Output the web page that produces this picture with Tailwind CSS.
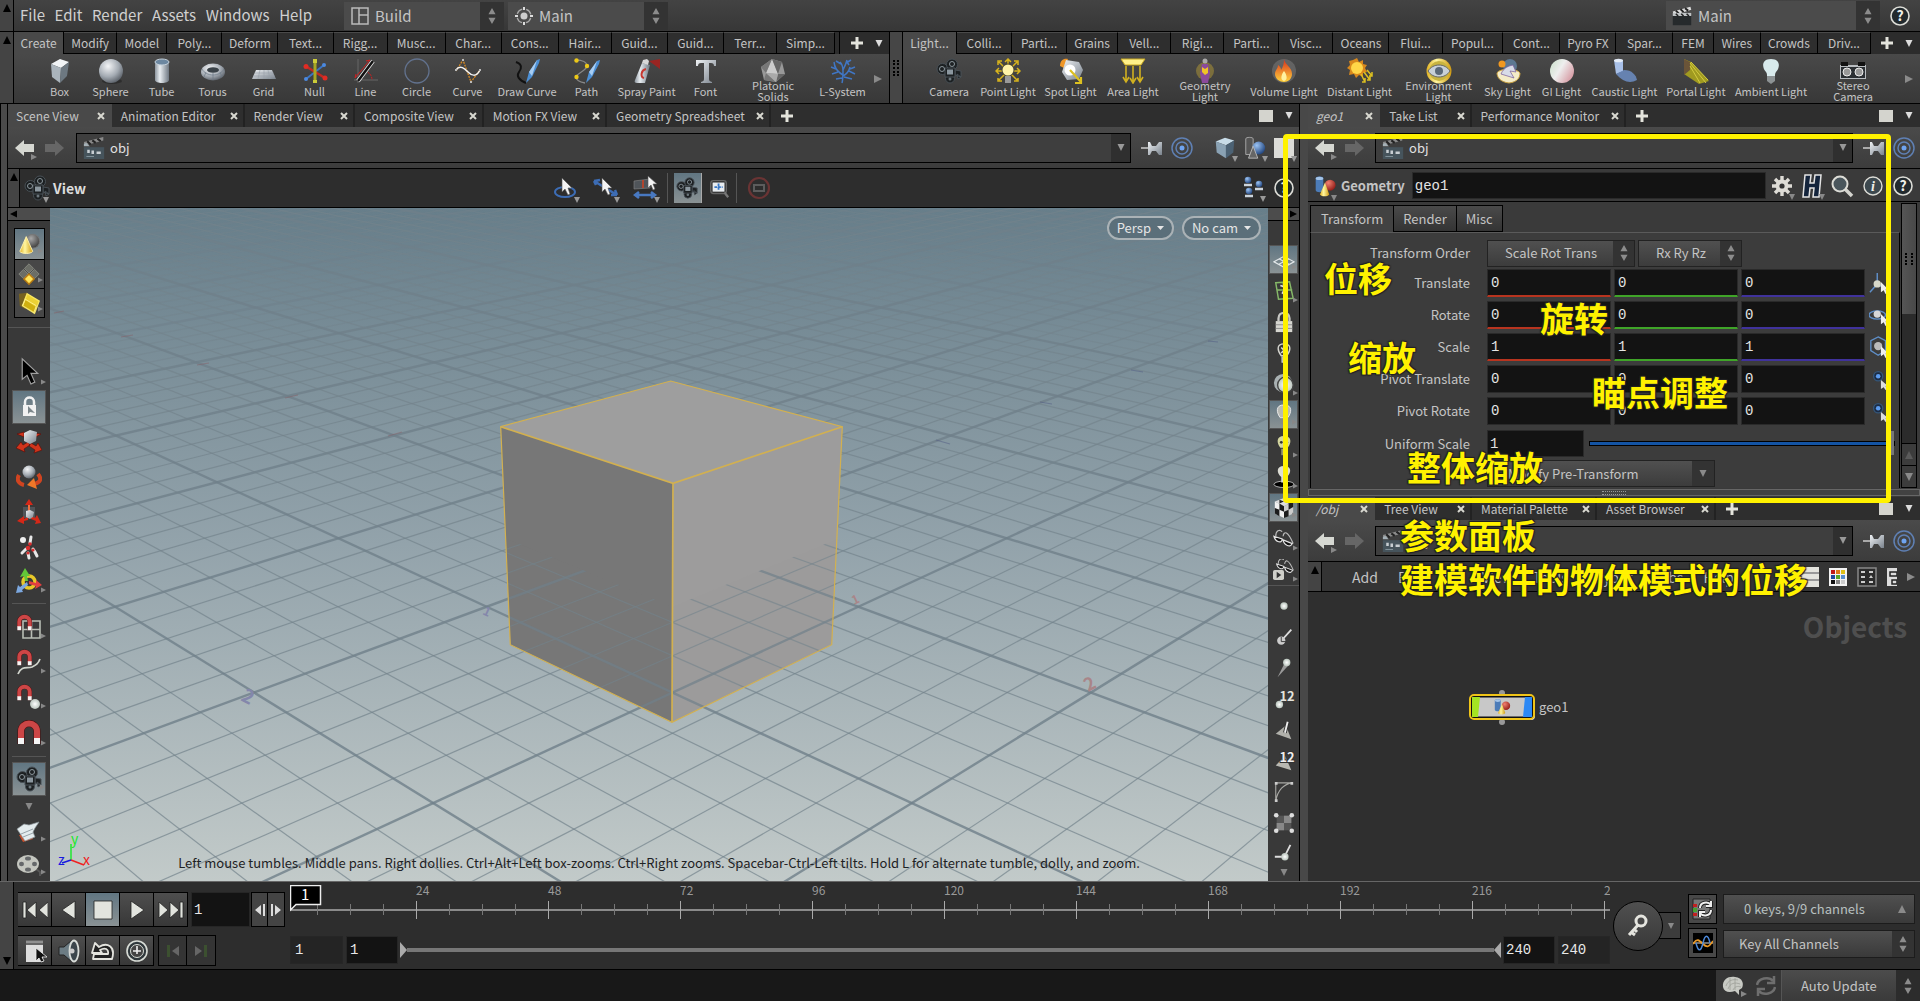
<!DOCTYPE html>
<html lang="zh-CN">
<head>
    <meta charset="UTF-8">
    <meta name="viewport" content="width=device-width, initial-scale=1.0">
    <title>Houdini - geo1</title>
    <script src="https://cdn.jsdelivr.net/npm/@tailwindcss/browser@4"></script>
</head>

<body class="h-screen flex flex-col overflow-hidden bg-[#3a3a3a] text-[#c4c4c4] text-[12px] leading-4 font-['Noto_Sans_CJK_SC','Noto_Sans',sans-serif]">

    <!-- Icon sheet -->
    <svg width="0" height="0" class="absolute" aria-hidden="true">
        <defs>
            <linearGradient id="gm" x1="0" y1="0" x2="1" y2="1"><stop offset="0" stop-color="#eef1f4"/><stop offset="1" stop-color="#79828c"/></linearGradient>
            <linearGradient id="gh" x1="0" x2="1"><stop offset="0" stop-color="#8d969f"/><stop offset=".35" stop-color="#e8edf1"/><stop offset="1" stop-color="#6f7882"/></linearGradient>
            <radialGradient id="gs" cx=".38" cy=".3" r=".8"><stop offset="0" stop-color="#f4f5f7"/><stop offset=".55" stop-color="#a4abb3"/><stop offset="1" stop-color="#4a5058"/></radialGradient>
            <radialGradient id="gd" cx=".38" cy=".3" r=".8"><stop offset="0" stop-color="#a8a8a8"/><stop offset="1" stop-color="#333"/></radialGradient>
            <radialGradient id="gb" cx=".35" cy=".3" r=".8"><stop offset="0" stop-color="#9cc4f4"/><stop offset="1" stop-color="#173a74"/></radialGradient>
            <radialGradient id="gr" cx=".35" cy=".3" r=".8"><stop offset="0" stop-color="#f08070"/><stop offset="1" stop-color="#8c1410"/></radialGradient>
            <linearGradient id="gy" x1="0" x2="1"><stop offset="0" stop-color="#e0b020"/><stop offset=".4" stop-color="#fff6a0"/><stop offset="1" stop-color="#d09a10"/></linearGradient>
            <linearGradient id="gf" x1="0" x2="0" y1="0" y2="1"><stop offset="0" stop-color="#d8301c"/><stop offset="1" stop-color="#ffd23c"/></linearGradient>
            <radialGradient id="gi"><stop offset="0" stop-color="#fff"/><stop offset="1" stop-color="#b9c4bc"/></radialGradient>
            <linearGradient id="gp" x1="0" x2="1" y2=".6"><stop offset="0" stop-color="#c8e0c8"/><stop offset=".5" stop-color="#eee"/><stop offset="1" stop-color="#d8a0a8"/></linearGradient>
        </defs>
        <symbol id="up" viewBox="0 0 10 10"><path d="M5 0 10 10H0z" fill="currentColor"/></symbol>
        <symbol id="dn" viewBox="0 0 10 10"><path d="M0 0H10L5 10z" fill="currentColor"/></symbol>
        <symbol id="rt" viewBox="0 0 10 10"><path d="M0 0 10 5 0 10z" fill="currentColor"/></symbol>
        <symbol id="lt" viewBox="0 0 10 10"><path d="M10 0V10L0 5z" fill="currentColor"/></symbol>
        <symbol id="spin" viewBox="0 0 8 18"><path d="M4 0 8 7H0zM0 11H8L4 18z" fill="#8c8c8c"/></symbol>
        <symbol id="plus" viewBox="0 0 12 12"><path d="M4.500 0h3v4.500H12v3H7.500V12h-3V7.500H0v-3h4.500z" fill="#e4e4dc"/></symbol>
        <symbol id="x" viewBox="0 0 8 8"><path d="M1 1 7 7M7 1 1 7" stroke="#d8d8d0" stroke-width="2"/></symbol>
        <symbol id="box" viewBox="0 0 26 26"><path d="M4 6 13 1l9 3-8 6z" fill="#f1f4f6"/><path d="M4 6l10 4-1 15-8-6z" fill="#aab4bc"/><path d="M14 10l8-6-2 14-7 7z" fill="#6d7881"/></symbol>
        <symbol id="sphere" viewBox="0 0 26 26"><ellipse cx="14" cy="23" rx="10" ry="3" fill="#222" opacity=".6"/><circle cx="13" cy="13" r="12" fill="url(#gs)"/></symbol>
        <symbol id="tube" viewBox="0 0 26 26"><path d="M6 4v18c0 4 14 4 14 0V4z" fill="url(#gh)"/><ellipse cx="13" cy="4" rx="7" ry="3" fill="#6c87a0" stroke="#c4d0da"/></symbol>
        <symbol id="torus" viewBox="0 0 26 26"><ellipse cx="13" cy="14" rx="12" ry="8.500" fill="url(#gs)"/><ellipse cx="13" cy="12" rx="6" ry="2.800" fill="#3a4248"/><path d="M2 11c4 8 18 8 22 0M13 15v7M6 14l-2 5M20 14l2 5" fill="none" stroke="#6d7a86" stroke-width=".7"/></symbol>
        <symbol id="grid" viewBox="0 0 26 26"><path d="M5 12h16l4 9H1z" fill="url(#gm)"/><path d="M3.500 15h19M2.500 18h21M9 12l-2 9M13 12v9M17 12l2 9" stroke="#97a0a8" stroke-width=".6"/></symbol>
        <symbol id="null" viewBox="0 0 26 26"><path d="M4 21 22 7" stroke="#3b74c2" stroke-width="2"/><circle cx="22" cy="7" r="2" fill="#4c8ae0"/><circle cx="4" cy="21" r="2" fill="#4c8ae0"/><path d="M5 9 23 20" stroke="#c22a22" stroke-width="2.500"/><circle cx="4" cy="8.500" r="2.500" fill="#e02c24"/><circle cx="23" cy="20" r="2.500" fill="#e02c24"/><path d="M13 2v23" stroke="#a8a822" stroke-width="3"/><path d="M11 1h4v4h-4zM11 22h4v3h-4z" fill="#cccc38"/></symbol>
        <symbol id="line" viewBox="0 0 26 26"><path d="M5 1v24M1 22h24" stroke="#666"/><path d="M12 13c6 2 7 6 7 9" stroke="#d02020" fill="none" stroke-dasharray="2 1"/><path d="M5 23 20 3" stroke="#e8e8e8" stroke-width="4"/><path d="M5 23 20 3" stroke="#111" stroke-width="2.500"/><path d="M2 20 17 2M2 20l1-4M17 2l-4 1" stroke="#d02020" fill="none"/></symbol>
        <symbol id="circle" viewBox="0 0 26 26"><circle cx="13" cy="13" r="12" fill="none" stroke="#62728e" stroke-width="1.300"/></symbol>
        <symbol id="curve" viewBox="0 0 26 26"><path d="M1 13 8 2l8 22 9-12" fill="none" stroke="#d88a20" stroke-width="1.300" stroke-dasharray="2 1"/><path d="M1 12c4-6 9-1 12 2s8 6 12-2" fill="none" stroke="#f4f4f4" stroke-width="1.500"/><path d="M0 11h2v2H0zM7 1h2v2H7zM15 23h2v2h-2zM24 11h2v2h-2z" fill="#bbb"/></symbol>
        <symbol id="draw" viewBox="0 0 26 26"><path d="M2 4c6 2 6 6 3 10s0 8 7 11" fill="none" stroke="#111" stroke-width="2"/><path d="M12 25 15 14 23 2l3-1-1 4-7 14z" fill="#4c8fd4"/><path d="M15 14l8-12-5 16z" fill="#a8cdf2"/></symbol>
        <symbol id="path" viewBox="0 0 26 26"><path d="M2 2c6 0 11 2 11 6S2 16 2 19s4 5 9 6" fill="none" stroke="#888" stroke-width="1.300"/><path d="M12 25 15 14 23 3l3-1-1 4-7 13z" fill="#4c8fd4"/><path d="M15 14l8-11-5 15z" fill="#a8cdf2"/><circle cx="2.500" cy="2.500" r="2.200" fill="#ecc818"/><circle cx="13" cy="8" r="2.200" fill="#ecc818"/><circle cx="2.500" cy="19" r="2.200" fill="#ecc818"/></symbol>
        <symbol id="spray" viewBox="0 0 26 26"><path d="M15 3 26 1v10z" fill="#a8201c" opacity=".85"/><path d="M8 5l8 2-5 18H3c-2 0-3-1-2-3z" fill="url(#gh)"/><path d="M9 2l4-1 2 2-1 4-6-2z" fill="#d8d8d8"/><path d="M12 11c-5 1-6 8-2 9" fill="none" stroke="#c83830" stroke-width="2"/></symbol>
        <symbol id="font" viewBox="0 0 26 26"><path d="M3 2h20v6h-2c0-2-1-3-3-3h-2v16c0 2 1 2 3 3v1H8v-1c2-1 3-1 3-3V5H8C6 5 5 6 5 8H3z" fill="url(#gm)"/></symbol>
        <symbol id="plato" viewBox="0 0 26 26"><path d="M12 1 22 4l3 12-9 8-12-2L1 9z" fill="#999"/><path d="M12 1 6 15l12 1z" fill="#ccc"/><path d="M12 1 6 15 1 9zM6 15l10 9-12-2z" fill="#777"/><path d="M12 1l10 3-4 12zM18 16l7 0-9 8z" fill="#666"/><path d="M6 15l12 1-2 8z" fill="#aaa"/></symbol>
        <symbol id="lsys" viewBox="0 0 26 26"><path d="M12 25c1-4 1-8 1-12M13 18c4-2 6-5 7-9M13 17C8 14 6 12 5 8M13 13c0-4-1-7-3-9M13 12c2-4 3-6 4-10M20 11l5-2M19 13l6 3M6 11 1 9M8 14l-6 2M11 6 6 3M16 5l5-3M12 20l-6 1M14 19l8 2M19 7l-2-3M5 9l-1-5" fill="none" stroke="#4076c4" stroke-width="1.500"/></symbol>
        <symbol id="cam" viewBox="0 0 26 26"><g fill="#1c2022" stroke="#485056"><circle cx="6.500" cy="11" r="5.500"/><circle cx="16" cy="6.500" r="5.500"/><path d="M19 12l6 1v6l-6-2zM21 16l4 3-3 2z"/><circle cx="14" cy="20.500" r="4.500"/><path d="M9 10h10v9H9z"/></g><circle cx="6" cy="11" r="2.500" fill="none" stroke="#8b969c"/><circle cx="16" cy="6" r="2.500" fill="none" stroke="#8b969c"/><path d="M11 11.500h6v5h-6z" fill="#8b979f"/><circle cx="14" cy="21" r="1.500" fill="#6c777d"/></symbol>
        <symbol id="plight" viewBox="0 0 26 26"><path d="M13 1v24M1 13h24M4 4l18 18M22 4 4 22M10 4l3-3 3 3M4 10l-3 3 3 3M22 10l3 3-3 3M3 7V3h4M23 7V3h-4M3 20v3h4M23 20v3h-4" fill="none" stroke="#d8b41c" stroke-width="1.500"/><circle cx="13" cy="12" r="6.500" fill="#4a4630"/><circle cx="13" cy="12" r="5.500" fill="#fff3a8"/><path d="M10 18h6v7h-6z" fill="#999"/></symbol>
        <symbol id="slight" viewBox="0 0 26 26"><path d="M2 8C2 2 6 0 10 1L6 10z" fill="#ef9628"/><path d="M8 2l13 2 4 8-4 9-12 1-5-8z" fill="url(#gm)"/><circle cx="12" cy="12" r="5.500" fill="#fff"/><path d="M12 12 23 24M23 19v6h-6" stroke="#dcc020" stroke-width="2.200" fill="none"/></symbol>
        <symbol id="alight" viewBox="0 0 26 26"><path d="M1 1h24l-4 6H5z" fill="#fff08a" stroke="#c8a820"/><path d="M6 8v15M13 8v16M20 8v15M3 19l3 5 3-5M10 20l3 5 3-5M17 19l3 5 3-5" fill="none" stroke="#d0b020" stroke-width="1.600"/></symbol>
        <symbol id="glight" viewBox="0 0 26 26"><circle cx="13" cy="13" r="9" fill="#e4c030" opacity=".35"/><circle cx="13" cy="3" r="2.500" fill="#aaa"/><path d="M10 6h6l2 9-2 10h-6L8 15z" fill="#8b4a9c"/><path d="M10 9l3 2 3-2v6l-3 2-3-3z" fill="#f0c428"/></symbol>
        <symbol id="vlight" viewBox="0 0 26 26"><circle cx="13" cy="13" r="12" fill="#bbb" opacity=".25"/><path d="M13 1c1 6 8 8 8 15 0 5-4 8-8 8s-9-3-9-8c0-4 3-5 3-9 3 2 3 4 3 5 2-3 3-6 3-11z" fill="url(#gf)"/><path d="M13 13c3 4 4 9 0 10-4-1-3-6 0-10z" fill="#fff1a0"/></symbol>
        <symbol id="dlight" viewBox="0 0 26 26"><path d="m10 0 2 4 4-2v4l4 1-2 3 2 4-4 1v4l-4-2-3 3-2-4-5 1 1-5-3-2 3-3-1-4 4-1z" fill="#d8881c"/><circle cx="10" cy="10" r="6" fill="#ffd648"/><path d="M14 16l4 8M17 14l6 8M20 12l5 6M15 24h3v-4M20 22h3v-4M22 18h3v-4" stroke="#dcc020" stroke-width="1.500" fill="none"/></symbol>
        <symbol id="elight" viewBox="0 0 26 26"><circle cx="13" cy="13" r="12.500" fill="url(#gy)"/><circle cx="13" cy="13" r="10" fill="#c8b440"/><path d="M2 13c5-8 17-8 22 0-5 8-17 8-22 0z" fill="#c8d0d8" stroke="#666"/><circle cx="13" cy="13" r="4" fill="#5a6878"/></symbol>
        <symbol id="sky" viewBox="0 0 26 26"><circle cx="15" cy="8" r="7" fill="#5c7892"/><circle cx="7" cy="6" r="3.500" fill="#f09820"/><path d="M2 15c2-5 20-5 23 0 0 4-2 9-11 10C5 24 2 19 2 15z" fill="#f4ecc8" stroke="#c8a040"/><path d="M6 16c3-7 8-8 12-9l3 7-6-1 4 7z" fill="#d8dce8" stroke="#775a9a" stroke-width=".7"/></symbol>
        <symbol id="gil" viewBox="0 0 26 26"><circle cx="13" cy="13" r="12" fill="url(#gp)"/></symbol>
        <symbol id="caustic" viewBox="0 0 26 26"><path d="M2 2h9v11l-7 3z" fill="#a8c0e8"/><path d="M4 16l8-4c8 0 12 5 13 10-7 4-14 2-21-6z" fill="#6f92cc" opacity=".8"/><ellipse cx="6.500" cy="2.500" rx="4.500" ry="1.800" fill="#e4ecf8"/></symbol>
        <symbol id="portal" viewBox="0 0 26 26"><path d="M1 1l7 3 18 19-10 3L1 16z" fill="#a09a20"/><path d="M1 1l6 3v8l-6 5z" fill="#6a5438"/><path d="M7 5l16 20M7 8l10 17M8 4l17 18" stroke="#d4cc40" stroke-width="1"/></symbol>
        <symbol id="ambient" viewBox="0 0 26 26"><path d="M13 1c10 0 9 9 5 13-1 1-1 3-1 4H9c0-1 0-3-1-4C4 10 3 1 13 1z" fill="#d8eaec"/><path d="M9 18h8v5l-4 3-4-3z" fill="#8c9294"/></symbol>
        <symbol id="stereo" viewBox="0 0 26 26"><path d="M0 7h26v14H0z" fill="#b8bcc0"/><path d="M1 4h7v4H1zM18 4h7v4h-7z" fill="#111"/><path d="M1 9h24v11H1z" fill="#2c3034"/><circle cx="7" cy="14" r="4" fill="#999" stroke="#eee"/><circle cx="19" cy="14" r="4" fill="#999" stroke="#eee"/></symbol>
        <symbol id="clap" viewBox="0 0 26 26"><path d="M1 7 24 1l1 4L2 12z" fill="#ddd"/><path d="M5 6l4 4M11 4l4 4M17 3l4 3" stroke="#222" stroke-width="2.500"/><path d="M1 12h24v13H1z" fill="#262a2c"/><path d="M1 9h24v4H1z" fill="#bfc3c5"/><path d="M5 10l3 3M12 10l3 3M19 10l3 3" stroke="#222" stroke-width="2"/></symbol>
        <symbol id="clap2" viewBox="0 0 26 28"><path d="M1 7 24 1v4L2 11z" fill="#8a8a8a"/><path d="M5 6l4 4M11 5l4 3M17 3l4 3" stroke="#222" stroke-width="2.500"/><path d="M1 9l3-1 4 4H1z" fill="#a4b0b6"/><path d="M1 13h24v14H1z" fill="#46545c"/><path d="M5 16h3v4H5zM10 17h3v4h-3zM16 18h5v3h-5z" fill="#c8ced2"/><path d="M4 24h9" stroke="#8fa0a8"/></symbol>
        <symbol id="back" viewBox="0 0 20 18"><path d="M0 9 9 1v4h10v8H9v4z" fill="#d6d8d2"/></symbol>
        <symbol id="fwd" viewBox="0 0 20 18"><path d="M20 9 11 1v4H1v8h10v4z" fill="#666"/></symbol>
        <symbol id="pin" viewBox="0 0 22 20"><path d="M0 10h7" stroke="#ccc" stroke-width="1.500"/><path d="M7 4l2 0 2 4h4l3-4h3v13h-3l-3-4h-4l-2 4H7z" fill="url(#gm)"/></symbol>
        <symbol id="target" viewBox="0 0 22 22"><g fill="none" stroke="#5f80b4" stroke-width="1.500"><circle cx="11" cy="11" r="10"/><circle cx="11" cy="11" r="6"/></g><circle cx="11" cy="11" r="2.500" fill="#6fa4f0"/></symbol>
        <symbol id="shade" viewBox="0 0 26 26"><path d="M3 6 13 2l10 3-9 5z" fill="#c8dce8"/><path d="M3 6l11 4v14L4 18z" fill="#8aa2b4"/><path d="M14 10l9-5-1 13-8 6z" fill="#4c6274"/></symbol>
        <symbol id="shapes" viewBox="0 0 26 26"><path d="M3 3c0-2 8-2 8 0v17H3z" fill="#555" stroke="#aaa"/><circle cx="17" cy="13" r="7" fill="url(#gb)"/><path d="M11 11 16 24H6z" fill="#666" stroke="#bbb"/></symbol>
        <symbol id="geo" viewBox="0 0 26 26"><path d="M2 4c0-3 9-3 9 0v14c0 3-9 3-9 0z" fill="#4c7cb8"/><ellipse cx="6.500" cy="4" rx="4.500" ry="2" fill="#a4c4e8"/><circle cx="19" cy="12" r="6.500" fill="url(#gr)"/><path d="M13 9 18 23c-2 3-9 3-11 0z" fill="url(#gy)"/></symbol>
        <symbol id="help" viewBox="0 0 22 22"><circle cx="11" cy="11" r="9" fill="#222a2e" stroke="#dcdcd6" stroke-width="1.600"/><text x="11" y="16" text-anchor="middle" font-size="14" font-weight="700" fill="#f0f0ea">?</text></symbol>
        <symbol id="info" viewBox="0 0 22 22"><circle cx="11" cy="11" r="9" fill="#3c484e" stroke="#dcdcd6" stroke-width="1.400"/><text x="11" y="16" text-anchor="middle" font-size="14" font-style="italic" font-weight="700" fill="#f0f0ea" font-family="Liberation Serif">i</text></symbol>
        <symbol id="gear" viewBox="0 0 24 24"><g stroke="#dedcd6" stroke-width="3.400"><path d="M12 2v20M2 12h20M5 5l14 14M19 5 5 19"/></g><circle cx="12" cy="12" r="6.500" fill="#dedcd6"/><circle cx="12" cy="12" r="2.600" fill="#333"/></symbol>
        <symbol id="hh" viewBox="0 0 24 24"><path d="M5 1h6L10 9h4l1-8h6l-2 22h-6l1-9h-4l-1 9H3z" fill="#14243c" stroke="#e4e4e4" stroke-width="1.500"/></symbol>
        <symbol id="mag" viewBox="0 0 24 24"><path d="m15 15 7 7" stroke="#d4d4ce" stroke-width="3.500"/><circle cx="10" cy="10" r="7.500" fill="#4a565c" stroke="#dcdcd6" stroke-width="2"/></symbol>
        <symbol id="ptr1" viewBox="0 0 26 26"><ellipse cx="12" cy="17" rx="10" ry="5" fill="none" stroke="#3c6cb4" stroke-width="2"/><path d="M9 3v14l3-3 3 6 2-1-2-6h4z" fill="#f4f4f4" stroke="#555" stroke-width=".6"/></symbol>
        <symbol id="ptr2" viewBox="0 0 26 26"><path d="M1 6 24 20M1 6l6-1M1 6l2 4M24 20l-6 0M24 20l-2-5" fill="none" stroke="#3c6cb4" stroke-width="2.500"/><path d="M9 3v14l3-3 3 6 2-1-2-6h4z" fill="#f4f4f4" stroke="#555" stroke-width=".6"/></symbol>
        <symbol id="ptr3" viewBox="0 0 26 26"><path d="M1 6l16-2v9L1 14z" fill="#50555a" stroke="#888" stroke-width=".6"/><path d="M10 5v8" stroke="#d04020" stroke-width="1.500"/><path d="M3 20h17M6 17l-4 3 4 3M18 17l4 3-4 3" fill="none" stroke="#4878c0" stroke-width="2.500"/><path d="M15 1v12l3-3 2 5 2-1-2-5h4z" fill="#f4f4f4" stroke="#555" stroke-width=".6"/></symbol>
        <symbol id="zoomb" viewBox="0 0 24 24"><rect x="3" y="4" width="17" height="14" rx="3" fill="none" stroke="#666" stroke-width="1.500"/><rect x="5" y="6" width="13" height="10" fill="#e8ecf0"/><path d="M11.500 7v8M7 11h9" stroke="#3878c8" stroke-width="2" stroke-dasharray="3 1"/><path d="m18 17 4 5" stroke="#777" stroke-width="2.500"/></symbol>
        <symbol id="stop" viewBox="0 0 24 24"><circle cx="12" cy="12" r="10" fill="none" stroke="#6a3434" stroke-width="2.200"/><rect x="7" y="9" width="10" height="6" fill="none" stroke="#5c5c5c" stroke-width="2"/></symbol>
        <symbol id="people" viewBox="0 0 24 24"><g fill="url(#gb)"><circle cx="7" cy="4" r="3.300"/><circle cx="18" cy="8" r="3.300"/><circle cx="8" cy="15" r="3.300"/></g><path d="M3 9h8M14 13h8M4 20h8" stroke="#ccd4dc" stroke-width="2.500"/></symbol>
        <symbol id="cone" viewBox="0 0 26 26"><circle cx="17" cy="10" r="7.500" fill="url(#gd)" stroke="#777"/><path d="M10 5 17 21c-2 3-12 3-14 0z" fill="url(#gy)" stroke="#fff2b0"/></symbol>
        <symbol id="diam" viewBox="0 0 26 26"><path d="M13 2l5 5-5 5-5-5zM7 8l5 5-5 5-5-5zM19 8l5 5-5 5-5-5z" fill="#6b6d66" stroke="#86887f"/><path d="M13 13l5.500 5.500-5.500 5.500-5.500-5.500z" fill="#ffe45c" stroke="#b87a10" stroke-width="1.600"/></symbol>
        <symbol id="ycube" viewBox="0 0 26 26"><path d="M2 3l9-1-2 18-6-4z" fill="#8a6c10" opacity=".7"/><path d="M11 3l13 8-5 13-13-8z" fill="#d0b010" stroke="#f4e468" stroke-width="1.500"/><path d="M11 3 8 9l12 8 4-6z" fill="#ffe84c" opacity=".6"/><path d="M6 16l3-7 12 7-3 8" fill="none" stroke="#fff08a"/></symbol>
        <symbol id="arrow" viewBox="0 0 26 30"><path d="M6 2v21l5-4 4 9 4-2-4-9h7z" fill="#000" stroke="#a0a0a0" stroke-width="1.200"/></symbol>
        <symbol id="lock" viewBox="0 0 26 26"><path d="M9 13V8c0-6 9-6 9 0v5" fill="none" stroke="#f2f2f2" stroke-width="2.500"/><path d="M7 11h13v11H7z" fill="#f2f2f2"/><path d="M12 12v8l2-2 5 1z" fill="#7d878b"/></symbol>
        <symbol id="move" viewBox="0 0 26 26"><path d="M1 5l7-2v5zM25 5l-7-1v5zM0 19l5-6 2 3 5-3 2 3-6 4 1 3zM26 21l-4-7-2 3-5-3-2 3 6 4-1 3z" fill="#d0341c" stroke="#5a0c06" stroke-width=".6"/><path d="M8 4l6-3 7 2-1 9-6 3-6-3z" fill="url(#gm)"/></symbol>
        <symbol id="rot" viewBox="0 0 26 26"><path d="M3 11C0 16 3 20 8 21M22 10c5 6 1 10-7 10" fill="none" stroke="#d04420" stroke-width="4"/><path d="M18 14l-7 7 10 4z" fill="#f07828"/><circle cx="13" cy="8" r="6.500" fill="url(#gs)"/></symbol>
        <symbol id="scl" viewBox="0 0 26 26"><path d="M7 8h12v11H7z" fill="#53585c" opacity=".9"/><path d="M13 0l4 6h-8zM1 22l7-5v3l4-2v3l-4 1v3zM25 24l-4-8-2 3-4-2v3l5 2-1 3z" fill="#d42818"/><path d="M13 6v6" stroke="#f07040" stroke-width="2"/><path d="M10 12l4-1 4 2-1 5-3 2-4-2z" fill="url(#gm)"/></symbol>
        <symbol id="pose" viewBox="0 0 26 26"><g stroke="#e8e8e8" stroke-width="3" stroke-linecap="round" fill="none"><path d="M15 3l-1 6M10 15l-4 4M17 15l2 3 2 4M12 19l1 5"/></g><circle cx="7" cy="6" r="3" fill="#eee"/><g fill="#d82c2c"><circle cx="14" cy="10" r="1.800"/><circle cx="12" cy="14" r="2.200"/><circle cx="17" cy="16" r="1.600"/><circle cx="12" cy="19" r="1.600"/></g></symbol>
        <symbol id="handle" viewBox="0 0 26 26"><circle cx="13" cy="14" r="6" fill="none" stroke="#e8c828" stroke-width="3.500"/><path d="M9 0l5 8-3 0 1 5-3 0-1-5-4 1z" fill="#62c838"/><path d="M26 17l-6-5v3l-7-2v3l7 2-1 3z" fill="#e04040"/><path d="M0 25l2-8 2 2 7-5 1 3-6 5 1 2z" fill="#7ca8e0"/></symbol>
        <symbol id="mg" viewBox="0 0 26 26"><path d="M5 24V11a8 7.500 0 0 1 16 0V24" fill="none" stroke="#4a0c0c" stroke-width="7"/><path d="M5 19V11a8 7.500 0 0 1 16 0V19" fill="none" stroke="#cc4646" stroke-width="6"/><path d="M2 18h6v6H2zM18 18h6v6h-6z" fill="#f4f4f4"/></symbol>
        <symbol id="mg1" viewBox="0 0 26 26"><path d="M7 7h17v17H7zM15.500 7v17M7 15.500h17" fill="none" stroke="#b8bdb4" stroke-width="1.600"/><use href="#mg" width="17" height="18"/></symbol>
        <symbol id="mg2" viewBox="0 0 26 26"><path d="M2 25c4-9 9-5 14-7 4-2 6-3 8-8" fill="none" stroke="#d0d4cc" stroke-width="1.800"/><use href="#mg" width="17" height="18"/></symbol>
        <symbol id="mg3" viewBox="0 0 26 26"><use href="#mg" width="17" height="18"/><circle cx="19" cy="20" r="5" fill="url(#gi)"/></symbol>
        <symbol id="fan" viewBox="0 0 26 26"><path d="M3 16l4 7 10-3-2-5z" fill="#c8502c"/><path d="M1 10l7-5 5 1 10-3-4 6-2 4 2 5-10 4z" fill="#e4ecee" stroke="#8a9498" stroke-width=".7"/><path d="M5 15l12-5M7 18l10-4" stroke="#96a2a8"/></symbol>
        <symbol id="reel" viewBox="0 0 26 26"><path d="M20 18l4 3v4" stroke="#555" stroke-width="2" fill="none"/><ellipse cx="12" cy="13" rx="11" ry="9" fill="#c4c6bf"/><g fill="#65686a"><ellipse cx="12" cy="7.500" rx="3" ry="2"/><ellipse cx="12" cy="18.500" rx="3" ry="2"/><ellipse cx="5.500" cy="13" rx="2.500" ry="2.300"/><ellipse cx="18.500" cy="13" rx="2.500" ry="2.300"/></g></symbol>
        <symbol id="rgrid" viewBox="0 0 24 24"><path d="M1 14l11-6 11 6-11 6zM7 11l11 6M17 11 6 17" fill="none" stroke="#e4e8ea" stroke-width="1.300"/></symbol>
        <symbol id="rpic" viewBox="0 0 24 24"><path d="M3 3l15-1 4 18-16 1zM4 11h17M11 2l2 19" fill="none" stroke="#86b868" stroke-width="1.600"/><path d="M8 6l6 2-4 7" fill="none" stroke="#ddd" stroke-width="2"/></symbol>
        <symbol id="rlock" viewBox="0 0 24 24"><path d="M6 11V8c0-8 12-8 12 0v3" fill="none" stroke="#c8c8c4" stroke-width="2.500"/><path d="M3 11h18v12H3z" fill="#d6d6d0"/><path d="M3 15h18M3 19h18" stroke="#888"/></symbol>
        <symbol id="rbx" viewBox="0 0 24 24"><path d="M12 2c9 0 7 8 3 13H9C5 10 3 2 12 2zM10 16v6h4v-6" fill="none" stroke="#d4d4ce" stroke-width="1.500"/><path d="M9 6l6 6M15 6l-6 6" stroke="#ddd" stroke-width="1.800"/></symbol>
        <symbol id="rball" viewBox="0 0 24 24"><circle cx="11" cy="11" r="10" fill="#a9b1b2"/><circle cx="13.500" cy="13" r="8.500" fill="url(#gi)" stroke="#444" stroke-width="1.500"/></symbol>
        <symbol id="rbulb" viewBox="0 0 24 24"><path d="M12 1c10 0 8 9 4 14H8C4 10 2 1 12 1z" fill="#b9bab4" stroke="#eee"/><path d="M9 16h6v6H9z" fill="#888"/></symbol>
        <symbol id="rbulb2" viewBox="0 0 24 24"><path d="M12 1c9 0 8 8 4 13H8C4 9 3 1 12 1z" fill="#d4d6a0"/><path d="M9 15h6v7H9z" fill="#989870"/><circle cx="9" cy="8" r="1.500" fill="#333"/><circle cx="15" cy="8" r="1.500" fill="#333"/></symbol>
        <symbol id="rbulb3" viewBox="0 0 24 24"><ellipse cx="12" cy="20" rx="11" ry="3.500" fill="#000" stroke="#bbb"/><path d="M12 0c9 0 8 8 3 12v6H9v-6C4 8 3 0 12 0z" fill="#dcdcd4"/></symbol>
        <symbol id="rcube" viewBox="0 0 24 24"><path d="M2 5l10-4 10 4-10 5z" fill="#ddd"/><path d="M7 3l5 2 5-2 5 2-5 2-5-2-5 2z" fill="#222"/><path d="M2 5l10 5v13L2 18z" fill="#f0f0f0"/><path d="M12 10l10-5v13l-10 5z" fill="#ccc"/><path d="M7 7l5 3v6l-5-2zM2 12l5 2v7l-5-3zM17 7l5-2v6l-5 3zM12 16l5-2v7l-5 2z" fill="#1c1c1c"/></symbol>
        <symbol id="glass" viewBox="0 0 24 24"><path d="M3 9c0-6 4-8 7-5M11 9c1-6 5-6 11 8" fill="none" stroke="#bbb" stroke-width="1.300"/><path d="M1 9l9 3c0 5-7 4-9-3zM11 13l10 4c-2 5-9 2-10-4z" fill="#111" stroke="#e4e4e4" stroke-width="1.300"/></symbol>
        <symbol id="glass2" viewBox="0 0 24 24"><use href="#glass" x="3" y="-3" width="21" height="22"/><rect x="0" y="12" width="12" height="11" rx="2" fill="#d0d0ca"/><path d="M4 14l5 3.500L4 21z" fill="#333"/></symbol>
        <symbol id="dot" viewBox="0 0 24 24"><circle cx="12" cy="12" r="4" fill="url(#gi)"/></symbol>
        <symbol id="nrm" viewBox="0 0 24 24"><path d="M10 15 20 4" stroke="#ddd" stroke-width="2"/><circle cx="9" cy="16" r="4.500" fill="#ccc"/><path d="M9 12v5h5" stroke="#333" fill="none"/></symbol>
        <symbol id="nrm2" viewBox="0 0 24 24"><path d="M5 22 13 6l4 3z" fill="#999"/><circle cx="15" cy="6" r="4" fill="url(#gi)"/></symbol>
        <symbol id="pn" viewBox="0 0 24 24"><circle cx="7" cy="18" r="4" fill="url(#gi)"/><text x="7" y="14" font-size="14" font-weight="700" fill="#e4e4de">12</text></symbol>
        <symbol id="fn" viewBox="0 0 24 24"><path d="M3 16l11-9 6 15z" fill="#b0b0aa"/><path d="M13 15l3-12" stroke="#333" stroke-width="4"/><path d="M13 15l3-12" stroke="#eee" stroke-width="2"/></symbol>
        <symbol id="fn2" viewBox="0 0 24 24"><path d="M3 17l10-11 7 16z" fill="#b8b8b2"/><text x="7" y="13" font-size="14" font-weight="700" fill="#eee" stroke="#333" stroke-width="2" paint-order="stroke">12</text></symbol>
        <symbol id="hull" viewBox="0 0 24 24"><path d="M3 23V2h18M3 22C5 10 12 3 21 2" fill="none" stroke="#a8a8a4" stroke-width="1.200"/><path d="M2 1h3v3H2zM19 1h3v3h-3zM2 20h3v3H2z" fill="#ccc"/></symbol>
        <symbol id="prim" viewBox="0 0 24 24"><path d="M4 4h16v16H4z" fill="#555"/><path d="M4 12h8v8H4zM12 4h8v8h-8z" fill="#888"/><g fill="#ddd"><circle cx="3.500" cy="3.500" r="2.500"/><circle cx="20.500" cy="3.500" r="2.500"/><circle cx="3.500" cy="20.500" r="2.500"/><circle cx="20.500" cy="20.500" r="2.500"/></g></symbol>
        <symbol id="vtx" viewBox="0 0 24 24"><path d="M2 15h9M13 14l6-12" stroke="#ddd" stroke-width="2"/><circle cx="13" cy="15" r="4" fill="url(#gi)"/></symbol>
        <symbol id="axes" viewBox="0 0 24 24"><path d="M9 1v12L1 22M9 13l8 5" stroke="#5f8fc8" stroke-width="1.600" fill="none"/><circle cx="9" cy="13" r="4" fill="#d8d8c8"/><path d="M13 11v11l3-2 2 4 2-1-2-4h3z" fill="#eee"/></symbol>
        <symbol id="orb" viewBox="0 0 24 24"><ellipse cx="9" cy="12" rx="9" ry="4.500" fill="none" stroke="#5f8fc8" stroke-width="1.600"/><circle cx="9" cy="11" r="4" fill="#d8d8d8"/><path d="M13 11v11l3-2 2 4 2-1-2-4h3z" fill="#eee"/></symbol>
        <symbol id="hex" viewBox="0 0 24 24"><path d="M10 1l8 4v11l-8 5-8-5V5z" fill="none" stroke="#5f8fc8" stroke-width="1.500"/><circle cx="10" cy="11" r="4.500" fill="#bbb"/><path d="M13 11v11l3-2 2 4 2-1-2-4h3z" fill="#eee"/></symbol>
        <symbol id="piv" viewBox="0 0 24 24"><circle cx="10" cy="9" r="5" fill="#1c2c44" stroke="#345578" stroke-width="1.500"/><circle cx="10" cy="9" r="2.500" fill="#5c9cf0"/><path d="M13 13v10l3-2 2 3 2-1-2-3h3z" fill="#ddd"/></symbol>
    </svg>

    <!-- Main menu -->
    <header class="flex h-8 shrink-0 border-b border-black bg-gradient-to-b from-[#434343] to-[#373737]">
        <div class="w-[14px] shrink-0 border-r border-black bg-[#444] pt-1 text-black"><svg class="mx-auto h-2 w-2"><use href="#up"/></svg></div>
        <nav class="flex w-[298px] items-center justify-between pb-[2px] pl-[6px] text-[15px] text-[#d0d0d0]">
            <a href="#">File</a><a href="#">Edit</a><a href="#">Render</a><a href="#">Assets</a><a href="#">Windows</a><a href="#">Help</a>
        </nav>
        <div class="ml-8 mt-[2px] flex h-7 gap-1">
            <label class="flex w-40 items-center bg-[#4b4b4b] pl-[7px]">
                <svg class="h-[18px] w-[18px] shrink-0" viewBox="0 0 18 18"><path d="M1 1h16v16H1zM8 1v16M8 8h9" fill="none" stroke="#bbb" stroke-width="1.500"/></svg>
                <select aria-label="Desktop" class="ml-[6px] min-w-0 flex-1 appearance-none bg-transparent text-[15px] leading-6 outline-none"><option>Build</option></select>
                <span class="flex h-7 w-6 items-center justify-center bg-[#333]"><svg class="h-4 w-2"><use href="#spin"/></svg></span>
            </label>
            <label class="flex w-40 items-center bg-[#4b4b4b] pl-[6px]">
                <svg class="h-5 w-5 shrink-0" viewBox="0 0 20 20"><circle cx="10" cy="10" r="7" fill="none" stroke="#aaa" stroke-dasharray="7 4" stroke-dashoffset="-2" stroke-width="1.300"/><circle cx="10" cy="10" r="3.500" fill="#ccc"/><path d="M9 1h2v3H9zM9 16h2v3H9zM1 9h3v2H1zM16 9h3v2h-3z" fill="#ddd"/></svg>
                <select aria-label="Radial menu" class="ml-[5px] min-w-0 flex-1 appearance-none bg-transparent text-[15px] leading-6 outline-none"><option>Main</option></select>
                <span class="flex h-7 w-6 items-center justify-center bg-[#333]"><svg class="h-4 w-2"><use href="#spin"/></svg></span>
            </label>
        </div>
        <label class="ml-auto mt-px flex h-[29px] w-[214px] items-center bg-[#4b4b4b] pl-[5px]">
            <svg class="h-5 w-[22px] shrink-0"><use href="#clap"/></svg>
            <select aria-label="Take" class="ml-[5px] min-w-0 flex-1 appearance-none bg-transparent text-[15px] leading-6 outline-none"><option>Main</option></select>
            <span class="flex h-[29px] w-6 items-center justify-center bg-[#333]"><svg class="h-4 w-2"><use href="#spin"/></svg></span>
        </label>
        <button aria-label="Help" class="mx-[9px]"><svg class="h-[22px] w-[22px]"><use href="#help"/></svg></button>
    </header>

    <!-- Shelves -->
    <section class="flex h-[72px] shrink-0 border-b border-black bg-[#2c2c2c]">
        <div class="w-[14px] shrink-0 border-r border-black bg-[#444] pt-1 text-black"><svg class="mx-auto h-2 w-2"><use href="#up"/></svg></div>
        <div class="flex w-[875px] shrink-0 flex-col">
            <div class="flex h-[22px]">
                <div id="tabsL" class="flex w-[821px]"></div>
                <span class="ml-1 w-px bg-black"></span>
                <button aria-label="Add shelf" class="ml-[11px]"><svg class="h-3 w-3"><use href="#plus"/></svg></button>
                <button aria-label="Shelf menu" class="ml-3 text-[#ddd]"><svg class="h-[7px] w-2"><use href="#dn"/></svg></button>
            </div>
            <div id="toolsL" class="flex flex-1 items-center bg-gradient-to-b from-[#494949] to-[#383838] pl-5"></div>
        </div>
        <div class="flex w-[14px] shrink-0 items-center justify-center border-x border-black bg-[#464646]"><span class="h-4 w-[6px] border-x-2 border-dotted border-black"></span></div>
        <div class="flex min-w-0 flex-1 flex-col">
            <div class="flex h-[22px]">
                <div id="tabsR" class="flex flex-1"></div>
                <button aria-label="Add shelf" class="ml-[10px]"><svg class="h-3 w-3"><use href="#plus"/></svg></button>
                <button aria-label="Shelf menu" class="ml-3 mr-[7px] text-[#ddd]"><svg class="h-[7px] w-2"><use href="#dn"/></svg></button>
            </div>
            <div id="toolsR" class="flex flex-1 items-center bg-gradient-to-b from-[#494949] to-[#383838] pl-[18px]"></div>
        </div>
    </section>

    <main class="flex min-h-0 flex-1">
        <div class="w-2 shrink-0 border-x border-black bg-[#4a4a4a]"></div>

        <!-- Scene view pane -->
        <section class="flex min-w-0 flex-1 flex-col">
            <div class="flex h-[23px] shrink-0 items-stretch bg-[#2e2e2e]">
                <div data-tabs="Scene View|Animation Editor|Render View|Composite View|Motion FX View|Geometry Spreadsheet" class="flex"></div>
                <span class="ml-auto mr-3 h-3 w-[14px] self-center bg-[#d4d4ce]"></span>
                <svg class="mr-[6px] h-[7px] w-2 self-center text-[#ddd]"><use href="#dn"/></svg>
            </div>
            <div class="flex h-[42px] shrink-0 items-center border-b border-black bg-gradient-to-b from-[#4a4a4a] to-[#3c3c3c] pl-[7px]">
                <button aria-label="Back" class="relative"><svg class="h-[18px] w-5"><use href="#back"/></svg><svg class="absolute -right-[2px] -bottom-1 h-2 w-[6px] text-[#888]"><use href="#rt"/></svg></button>
                <button aria-label="Forward" class="ml-[9px]"><svg class="h-[18px] w-5"><use href="#fwd"/></svg></button>
                <label class="ml-3 flex h-[30px] flex-1 items-center border border-black bg-[#3e3e3e] pl-[6px]">
                    <svg class="h-6 w-[22px] shrink-0"><use href="#clap2"/></svg>
                    <input aria-label="Network path" value="obj" class="ml-[5px] min-w-0 flex-1 bg-transparent text-[13px] text-[#e0e0e0] outline-none">
                    <span class="flex h-full w-[19px] items-center justify-center bg-[#2f2f2f] text-[#999]"><svg class="h-[7px] w-2"><use href="#dn"/></svg></span>
                </label>
                <button aria-label="Pin" class="ml-[10px]"><svg class="h-5 w-[22px]"><use href="#pin"/></svg></button>
                <button aria-label="Link" class="ml-2"><svg class="h-[22px] w-[22px]"><use href="#target"/></svg></button>
                <button aria-label="Shading" class="relative ml-5"><svg class="h-6 w-6"><use href="#shade"/></svg><svg class="absolute -right-[2px] -bottom-[2px] h-[6px] w-2 text-[#999]"><use href="#dn"/></svg></button>
                <button aria-label="Display objects" class="relative ml-[6px]"><svg class="h-6 w-6"><use href="#shapes"/></svg><svg class="absolute -right-[2px] -bottom-[2px] h-[6px] w-2 text-[#999]"><use href="#dn"/></svg></button>
                <button aria-label="Layout" class="relative ml-[7px] mr-[5px] h-5 w-5 bg-[#dcdcd8]"><svg class="absolute -right-1 -bottom-1 h-[6px] w-2 text-[#999]"><use href="#dn"/></svg></button>
            </div>
            <div class="flex h-[39px] shrink-0 items-center border-b border-black bg-[#2d2d2d]">
                <div class="h-full w-3 border-r border-black bg-[#444] pt-1 text-black"><svg class="mx-auto h-2 w-2"><use href="#up"/></svg></div>
                <button class="flex items-center pl-1 text-[14px] font-bold text-[#dcdcdc]"><span class="relative mr-[3px]"><svg class="h-[26px] w-[26px]"><use href="#cam"/></svg><svg class="absolute right-0 -bottom-[2px] h-[6px] w-2 text-[#999]"><use href="#dn"/></svg></span>View</button>
                <div class="flex flex-1 items-center justify-center pr-1">
                    <button aria-label="Tumble" class="relative mr-[14px]"><svg class="h-[26px] w-[26px]"><use href="#ptr1"/></svg><svg class="absolute -right-[2px] -bottom-[2px] h-[6px] w-2 text-[#999]"><use href="#dn"/></svg></button>
                    <button aria-label="Pan" class="relative mr-[14px]"><svg class="h-[26px] w-[26px]"><use href="#ptr2"/></svg><svg class="absolute -right-[2px] -bottom-[2px] h-[6px] w-2 text-[#999]"><use href="#dn"/></svg></button>
                    <button aria-label="Dolly" class="relative mr-2"><svg class="h-[26px] w-[26px]"><use href="#ptr3"/></svg><svg class="absolute -right-[2px] -bottom-[2px] h-[6px] w-2 text-[#999]"><use href="#dn"/></svg></button>
                    <span class="h-[30px] w-px bg-[#555]"></span>
                    <button aria-label="View tool" class="ml-[6px] flex h-[30px] w-7 items-center justify-center border-r border-[#aaa] bg-gradient-to-b from-[#617682] to-[#8a9294]"><svg class="h-[22px] w-[22px]"><use href="#cam"/></svg></button>
                    <button aria-label="Box zoom" class="mx-[6px]"><svg class="h-[22px] w-[22px]"><use href="#zoomb"/></svg></button>
                    <span class="h-[30px] w-px bg-[#555]"></span>
                    <button aria-label="Stop" class="ml-[10px]"><svg class="h-6 w-6"><use href="#stop"/></svg></button>
                </div>
                <button aria-label="Views" class="relative"><svg class="h-6 w-6"><use href="#people"/></svg><svg class="absolute -right-[2px] -bottom-[2px] h-[6px] w-2 text-[#999]"><use href="#dn"/></svg></button>
                <button aria-label="Viewport help" class="ml-2 mr-1"><svg class="h-[22px] w-[22px]"><use href="#help"/></svg></button>
            </div>

            <div class="flex min-h-0 flex-1">
                <!-- Left tool column -->
                <div id="colL" class="flex w-[42px] shrink-0 flex-col items-center bg-[#393939]">
                    <div class="h-[13px] w-full border-b border-black bg-[#4c4c4c] pl-[2px] pt-[2px] text-black"><svg class="h-2 w-[7px]"><use href="#lt"/></svg></div>
                </div>
                <!-- Viewport -->
                <div class="relative min-w-0 flex-1">
                    <svg class="block h-full w-full" viewBox="50 208 1218 673" preserveAspectRatio="xMidYMid slice">
                        <defs>
                            <linearGradient id="sky0" x1="0" y1="0" x2="0" y2="1"><stop offset="0" stop-color="#677e8a"/><stop offset=".5" stop-color="#93a3ab"/><stop offset="1" stop-color="#c2cac9"/></linearGradient>
                            <clipPath id="front"><path d="M505 538 672.500 606.700 839.600 538 832 645 672 722 510 645z"/></clipPath>
                        </defs>
                        <rect x="50" y="208" width="1218" height="673" fill="url(#sky0)"/>
                        <g id="lines" fill="none"></g>
                        <g fill="none" stroke="#8a5a62" stroke-width="1.200" opacity=".45"><path d="M54 313l10-2M121 337l12-2M197 365l12-2M285 398l13-3M388 436l14-4"/></g>
                        <g fill="none" stroke="#4c5480" stroke-width="1.200" opacity=".45"><path d="M936 440l14 4M1040 402l12 2M1131 370l12 2M1208 341l10 1"/></g>
                        <g font-weight="700" fill="#8487ab"><text transform="translate(240 700) rotate(28)" font-size="19">2</text><text transform="translate(482 614) rotate(25)" font-size="12">1</text></g>
                        <g font-weight="700" fill="#a98588"><text transform="translate(1088 692) rotate(-28)" font-size="18">2</text><text transform="translate(854 605) rotate(-25)" font-size="12">1</text></g>
                        <path d="M670.700 381 842.300 426.700 673 483.300 500.700 426.700z" fill="#9e9e9e"/>
                        <path d="M500.700 426.700 673 483.300 672 722.300 510.300 644.700z" fill="#777"/>
                        <path d="M673 483.300 842.300 426.700 831.700 644.700 672 722.300z" fill="#9d9c9c"/>
                        <use href="#lines" clip-path="url(#front)" opacity=".85"/>
                        <g fill="none" stroke="#d2b050"><path d="M500.700 426.700 670.700 381 842.300 426.700 831.700 644.700 672 722.300 510.300 644.700z" stroke-width="1.200"/><path d="M500.700 426.700 673 483.300 842.300 426.700M673 483.300 672 722.300" stroke-width="1.700"/></g>
                        <g fill="none" stroke-width="1.500"><path d="M71 860V844" stroke="#20e830"/><path d="M71 860l13 5" stroke="#f02020"/><path d="M71 860l-9 3" stroke="#1818e0"/></g>
                        <g font-size="14"><text x="71" y="844" fill="#18e828">y</text><text x="83" y="865" fill="#f02020">x</text><text x="58" y="865" fill="#1818e0">z</text></g>
                    </svg>
                    <div class="absolute right-[7px] top-2 flex gap-2">
                        <button class="flex h-6 items-center gap-[6px] rounded-full border-2 border-[#aab2b6] bg-[#5b6f7a] px-2 text-[13px] text-[#e6e6e6]">Persp<svg class="h-1 w-[7px]" viewBox="0 0 7 4"><path d="M0 0h7L3.500 4z" fill="#e6e6e6"/></svg></button>
                        <button class="flex h-6 items-center gap-[6px] rounded-full border-2 border-[#aab2b6] bg-[#5b6f7a] px-2 text-[13px] text-[#e6e6e6]">No cam<svg class="h-1 w-[7px]" viewBox="0 0 7 4"><path d="M0 0h7L3.500 4z" fill="#e6e6e6"/></svg></button>
                    </div>
                    <p class="absolute inset-x-0 bottom-2 text-center text-[13px] leading-5 text-[#1e2224]">Left mouse tumbles. Middle pans. Right dollies. Ctrl+Alt+Left box-zooms. Ctrl+Right zooms. Spacebar-Ctrl-Left tilts. Hold L for alternate tumble, dolly, and zoom.</p>
                </div>
                <!-- Display options column -->
                <div id="colR" class="flex w-[31px] shrink-0 flex-col items-center bg-[#393939]">
                    <div class="mb-[23px] h-[13px] w-full shrink-0 border-b border-black bg-[#4c4c4c] pr-[2px] pt-[2px] text-black"><svg class="ml-auto h-2 w-[7px]"><use href="#rt"/></svg></div>
                </div>
            </div>
        </section>

        <div class="w-[9px] shrink-0 border-l border-black bg-[#484848]"></div>

        <!-- Right side -->
        <section class="relative flex w-[612px] shrink-0 flex-col">
            <div class="flex h-[23px] shrink-0 bg-[#2e2e2e]">
                <div data-tabs="*geo1|Take List|Performance Monitor" class="flex"></div>
                <span class="ml-auto mr-3 h-3 w-[14px] self-center bg-[#d4d4ce]"></span>
                <svg class="mr-[7px] h-[7px] w-2 self-center text-[#ddd]"><use href="#dn"/></svg>
            </div>
            <div class="flex h-[42px] shrink-0 items-center border-b border-black bg-gradient-to-b from-[#4a4a4a] to-[#3c3c3c] pl-[7px]">
                <button aria-label="Back" class="relative"><svg class="h-[18px] w-5"><use href="#back"/></svg><svg class="absolute -right-[2px] -bottom-1 h-2 w-[6px] text-[#888]"><use href="#rt"/></svg></button>
                <button aria-label="Forward" class="ml-[9px]"><svg class="h-[18px] w-5"><use href="#fwd"/></svg></button>
                <label class="ml-[11px] flex h-[30px] flex-1 items-center border border-black bg-[#3e3e3e] pl-[6px]">
                    <svg class="h-6 w-[22px] shrink-0"><use href="#clap2"/></svg>
                    <input aria-label="Parameter path" value="obj" class="ml-[5px] min-w-0 flex-1 bg-transparent text-[13px] text-[#e0e0e0] outline-none">
                    <span class="flex h-full w-[19px] items-center justify-center bg-[#2f2f2f] text-[#999]"><svg class="h-[7px] w-2"><use href="#dn"/></svg></span>
                </label>
                <button aria-label="Pin" class="ml-[10px]"><svg class="h-5 w-[22px]"><use href="#pin"/></svg></button>
                <button aria-label="Link" class="ml-2 mr-[5px]"><svg class="h-[22px] w-[22px]"><use href="#target"/></svg></button>
            </div>
            <div class="flex h-[33px] shrink-0 items-center border-b border-black pl-[6px] pt-px">
                <span class="relative"><svg class="h-[22px] w-[22px]"><use href="#geo"/></svg><svg class="absolute -right-[2px] -bottom-1 h-[6px] w-2 text-[#888]"><use href="#dn"/></svg></span>
                <label for="nodeName" class="ml-[5px] text-[13px] font-bold">Geometry</label>
                <input id="nodeName" value="geo1" class="ml-[7px] h-[27px] min-w-0 flex-1 border border-[#2a2a2a] bg-[#131313] px-[2px] font-['Liberation_Mono',monospace] text-[14px] text-[#e4e4e4] outline-none">
                <button aria-label="Gear menu" class="relative ml-1"><svg class="h-6 w-6"><use href="#gear"/></svg><svg class="absolute -right-[2px] -bottom-[2px] h-[6px] w-2 text-[#888]"><use href="#dn"/></svg></button>
                <button aria-label="Houdini" class="relative ml-[6px]"><svg class="h-6 w-6"><use href="#hh"/></svg><svg class="absolute -right-[2px] -bottom-[2px] h-[6px] w-2 text-[#888]"><use href="#dn"/></svg></button>
                <button aria-label="Search" class="ml-[6px]"><svg class="h-6 w-6"><use href="#mag"/></svg></button>
                <button aria-label="Info" class="ml-2"><svg class="h-[22px] w-[22px]"><use href="#info"/></svg></button>
                <button aria-label="Help" class="ml-2 mr-[6px]"><svg class="h-[22px] w-[22px]"><use href="#help"/></svg></button>
            </div>
            <div class="flex h-[286px] shrink-0 pl-[2px] pr-[3px]">
                <div class="flex min-w-0 flex-1 flex-col pt-[3px]">
                    <div class="flex h-[27px] text-[13px]">
                        <button class="border border-b-0 border-black bg-[#424242] px-[10px]">Transform</button>
                        <button class="border border-l-0 border-black bg-gradient-to-b from-[#4a4a4a] to-[#343434] px-[9px]">Render</button>
                        <button class="border border-l-0 border-black bg-gradient-to-b from-[#4a4a4a] to-[#343434] px-[9px]">Misc</button>
                    </div>
                    <form id="parms" class="flex min-h-0 flex-1 flex-col overflow-hidden border-x border-black border-t border-t-[#5a5a5a] bg-[#3c3c3c] pt-[6px] text-[13px]">
                        <div class="flex h-7 shrink-0 items-center">
                            <label for="order" class="w-[159px] text-right">Transform Order</label>
                            <span class="ml-[17px] flex h-[27px] w-[148px] border border-[#222] bg-gradient-to-b from-[#505050] to-[#3c3c3c]">
                                <select id="order" class="min-w-0 flex-1 appearance-none pl-[17px] leading-5 outline-none"><option>Scale Rot Trans</option></select>
                                <span class="flex w-[21px] items-center justify-center bg-[#333]"><svg class="h-4 w-2"><use href="#spin"/></svg></span>
                            </span>
                            <span class="ml-[3px] flex h-[27px] w-[104px] border border-[#222] bg-gradient-to-b from-[#505050] to-[#3c3c3c]">
                                <select aria-label="Rotate order" class="min-w-0 flex-1 appearance-none pl-[17px] leading-5 outline-none"><option>Rx Ry Rz</option></select>
                                <span class="flex w-[21px] items-center justify-center bg-[#333]"><svg class="h-4 w-2"><use href="#spin"/></svg></span>
                            </span>
                        </div>
                        <div id="vectors" class="shrink-0"></div>
                        <div class="mt-[2px] flex h-[29px] shrink-0 items-center">
                            <label for="uscale" class="w-[159px] text-right">Uniform Scale</label>
                            <input id="uscale" value="1" class="ml-[17px] h-[27px] w-[97px] border border-[#2a2a2a] bg-[#131313] px-[2px] font-['Liberation_Mono',monospace] text-[14px] text-[#e4e4e4] outline-none">
                            <input type="range" aria-label="Uniform Scale slider" value="100" class="ml-[5px] mr-1 h-6 min-w-0 flex-1 appearance-none bg-transparent [&::-webkit-slider-runnable-track]:h-[5px] [&::-webkit-slider-runnable-track]:border [&::-webkit-slider-runnable-track]:border-black [&::-webkit-slider-runnable-track]:bg-[#1454a4] [&::-webkit-slider-thumb]:-mt-[11px] [&::-webkit-slider-thumb]:h-6 [&::-webkit-slider-thumb]:w-1 [&::-webkit-slider-thumb]:appearance-none [&::-webkit-slider-thumb]:bg-[#777]">
                        </div>
                        <button type="button" class="ml-[176px] mt-[2px] flex h-[27px] w-[228px] shrink-0 items-center justify-between border border-[#222] bg-gradient-to-b from-[#505050] to-[#3c3c3c] pl-5">
                            Modify Pre-Transform
                            <span class="flex h-full w-[22px] items-center justify-center bg-[#333] text-[#8a8a8a]"><svg class="h-[7px] w-2"><use href="#dn"/></svg></span>
                        </button>
                    </form>
                </div>
                <!-- Scrollbar -->
                <div class="ml-px mt-px flex w-4 flex-col border border-black bg-[#2b2b2b]">
                    <div class="flex h-[110px] items-center justify-center bg-gradient-to-r from-[#555] to-[#484848]"><span class="h-3 w-2 border-x-2 border-dotted border-black"></span></div>
                    <div class="mt-auto flex h-[22px] items-center justify-center border-t border-black bg-[#3c3c3c] text-[#5a5a5a]"><svg class="h-2 w-2"><use href="#up"/></svg></div>
                    <div class="flex h-[22px] items-center justify-center border-t border-black bg-[#3c3c3c] text-[#8a8a8a]"><svg class="h-2 w-2"><use href="#dn"/></svg></div>
                </div>
            </div>
            <div class="my-px flex h-[7px] shrink-0 items-center justify-center border border-[#666] bg-[#424242]"><span class="h-1 w-6 border-y border-dotted border-[#999]"></span></div>

            <!-- Network pane -->
            <div class="flex h-[23px] shrink-0 bg-[#2e2e2e]">
                <div data-tabs="*/obj|Tree View|Material Palette|Asset Browser" class="flex"></div>
                <span class="ml-auto mr-3 h-3 w-[14px] self-center bg-[#d4d4ce]"></span>
                <svg class="mr-[7px] h-[7px] w-2 self-center text-[#ddd]"><use href="#dn"/></svg>
            </div>
            <div class="flex h-[42px] shrink-0 items-center border-b border-black bg-gradient-to-b from-[#4a4a4a] to-[#3c3c3c] pl-[7px]">
                <button aria-label="Back" class="relative"><svg class="h-[18px] w-5"><use href="#back"/></svg><svg class="absolute -right-[2px] -bottom-1 h-2 w-[6px] text-[#888]"><use href="#rt"/></svg></button>
                <button aria-label="Forward" class="ml-[9px]"><svg class="h-[18px] w-5"><use href="#fwd"/></svg></button>
                <label class="ml-[11px] flex h-[30px] flex-1 items-center border border-black bg-[#3e3e3e] pl-[6px]">
                    <svg class="h-6 w-[22px] shrink-0"><use href="#clap2"/></svg>
                    <input aria-label="Network path" value="obj" class="ml-[5px] min-w-0 flex-1 bg-transparent text-[13px] text-[#e0e0e0] outline-none">
                    <span class="flex h-full w-[19px] items-center justify-center bg-[#2f2f2f] text-[#999]"><svg class="h-[7px] w-2"><use href="#dn"/></svg></span>
                </label>
                <button aria-label="Pin" class="ml-[10px]"><svg class="h-5 w-[22px]"><use href="#pin"/></svg></button>
                <button aria-label="Link" class="ml-2 mr-[5px]"><svg class="h-[22px] w-[22px]"><use href="#target"/></svg></button>
            </div>
            <nav class="flex h-[30px] shrink-0 items-center gap-5 border-b border-black bg-[#343434] text-[14px]">
                <span class="-mr-1 h-full w-[14px] border-r border-black bg-[#444] pt-1 text-black"><svg class="mx-auto h-2 w-2"><use href="#up"/></svg></span>
                <a href="#" class="ml-[14px]">Add</a><a href="#">Edit</a><a href="#">Go</a><a href="#">View</a><a href="#">Tools</a><a href="#">Layout</a><a href="#">Labs</a><a href="#">Help</a>
                <span class="ml-auto flex items-center gap-[10px]">
                    <button aria-label="List"><svg class="h-[22px] w-5" viewBox="0 0 20 22"><path d="M0 1h20v20H0z" fill="#e4e4de"/><path d="M0 7h20M0 14h20" stroke="#999" stroke-width="2"/></svg></button>
                    <button aria-label="Palette"><svg class="h-[18px] w-[18px]" viewBox="0 0 18 18"><path d="M0 0h18v18H0z" fill="#f4f4f4"/><path d="M2 2h4v4H2z" fill="#c01818"/><path d="M7 2h4v4H7z" fill="#e07818"/><path d="M12 2h4v4h-4z" fill="#e0c018"/><path d="M2 7h4v4H2z" fill="#2048a0"/><path d="M7 7h4v4H7z" fill="#58a828"/><path d="M12 7h4v4h-4z" fill="#5890d0"/><path d="M2 12h4v4H2z" fill="#111"/><path d="M7 12h4v4H7z" fill="#888"/><path d="M12 12h4v4h-4z" fill="#ccc"/></svg></button>
                    <button aria-label="Shapes"><svg class="h-5 w-5" viewBox="0 0 20 20"><path d="M1 1h18v18H1z" fill="#2b2b2b" stroke="#888" stroke-width="1.500"/><path d="M4 4h4v2H4zM12 4h4v2h-4zM4 9h4v2H4zM12 11l2-3 2 3zM4 14h4v2H4zM12 14h4v2h-4z" fill="#ccc"/></svg></button>
                    <button aria-label="Notes"><svg class="h-[18px] w-[10px]" viewBox="0 0 10 18"><path d="M0 0h10v18H0z" fill="#ddd"/><path d="M3 4h7v4H3zM5 12h5v4H5z" fill="none" stroke="#222" stroke-width="1.500"/></svg></button>
                    <svg class="mr-[5px] h-2 w-2 text-[#8c8c8c]"><use href="#rt"/></svg>
                </span>
            </nav>
            <div class="relative flex-1 bg-[#2f2f2f]">
                <h2 class="absolute right-[13px] top-[14px] text-[28px] leading-10 font-bold text-[#4f4f4f]">Objects</h2>
                <div class="absolute left-[161px] top-[97px] flex items-center gap-[3px] text-[13px]">
                    <svg class="h-9 w-[67px]" viewBox="0 0 67 36"><circle cx="33" cy="4" r="3" fill="#999"/><circle cx="33" cy="33" r="3" fill="#999"/><rect x="4" y="9" width="62" height="22" rx="4" fill="#ddd"/><rect x="2" y="7" width="62" height="22" rx="4" fill="#c8c8c8" stroke="#111" stroke-width="3"/><path d="M3 8h8L9 28H3z" fill="#a4e422"/><path d="M56 8h7v20h-9z" fill="#2c88f4"/><rect x="1" y="6" width="64" height="24" rx="4" fill="none" stroke="#f0c418" stroke-width="2"/><svg x="24" y="9" width="18" height="17"><use href="#geo"/></svg></svg>
                    geo1
                </div>
            </div>

            <!-- Annotations over the panels -->
            <div class="pointer-events-none absolute inset-0 whitespace-nowrap text-[34px] leading-[34px] font-bold text-[#fff200] [text-shadow:1px_1px_1px_#222,-1px_-1px_1px_#222,1px_-1px_1px_#222,-1px_1px_1px_#222]">
                <div class="absolute -left-[25px] top-[30px] h-[369px] w-[608px] rounded-sm border-[5px] border-[#fff200]"></div>
                <p class="absolute left-4 top-[157px]">位移</p>
                <p class="absolute left-[232px] top-[197px]">旋转</p>
                <p class="absolute left-10 top-[236px]">缩放</p>
                <p class="absolute left-[284px] top-[271px]">瞄点调整</p>
                <p class="absolute left-[99px] top-[346px]">整体缩放</p>
                <p class="absolute left-[92px] top-[414px]">参数面板</p>
                <p class="absolute left-[92px] top-[458px]">建模软件的物体模式的位移</p>
            </div>
        </section>
    </main>

    <!-- Playbar -->
    <section class="flex h-[89px] shrink-0 border-y border-t-[#666] border-b-black bg-[#2d2d2d]">
        <div class="flex w-[14px] shrink-0 items-end border-r border-black bg-[#444] pb-1 text-black"><svg class="mx-auto h-2 w-2"><use href="#dn"/></svg></div>
        <div class="flex w-[276px] shrink-0 flex-col gap-2 pl-1 pt-[10px]">
            <div class="flex h-[35px]">
                <div id="play" class="flex"></div>
                <input aria-label="Current frame" value="1" class="ml-[3px] w-[59px] border border-[#262626] bg-[#131313] px-[2px] font-['Liberation_Mono',monospace] text-[14px] text-[#e8e8e8] outline-none">
                <button aria-label="Previous frame" class="ml-px flex w-[17px] items-center justify-center border border-black bg-[#444]"><svg class="h-3 w-[10px]" viewBox="0 0 10 12"><path d="M6 1v10L0 6zM8 0h2v12H8z" fill="#ddd"/></svg></button>
                <button aria-label="Next frame" class="flex w-[17px] items-center justify-center border border-l-0 border-black bg-[#444]"><svg class="h-3 w-[10px]" viewBox="0 0 10 12"><path d="M4 1v10l6-5zM0 0h2v12H0z" fill="#ddd"/></svg></button>
            </div>
            <div id="opts" class="flex h-[31px]"></div>
        </div>
        <div class="flex min-w-0 flex-1 flex-col pt-[3px]">
            <svg id="timeline" class="h-10 w-full overflow-hidden"></svg>
            <div class="mt-[11px] flex h-7 items-center font-['Liberation_Mono',monospace] text-[14px] text-[#e8e8e8]">
                <input aria-label="Start" value="1" class="h-7 w-[53px] border border-[#262626] bg-[#242424] px-1 outline-none">
                <input aria-label="Range start" value="1" class="ml-[3px] h-7 w-[52px] border border-[#262626] bg-[#131313] px-[3px] outline-none">
                <div class="mx-[2px] flex flex-1 items-center text-[#aaa]"><svg class="h-4 w-[7px]" viewBox="0 0 7 16"><path d="M0 0 7 8 0 16z" fill="#aaa"/></svg><span class="h-1 flex-1 bg-[#777]"></span><svg class="h-4 w-[7px]" viewBox="0 0 7 16"><path d="M7 0 0 8l7 8z" fill="#aaa"/></svg></div>
                <input aria-label="Range end" value="240" class="h-7 w-[52px] border border-[#262626] bg-[#131313] px-[2px] outline-none">
                <input aria-label="End" value="240" class="ml-[3px] h-7 w-[52px] border border-[#262626] bg-[#242424] px-[2px] outline-none">
            </div>
        </div>
        <div class="flex w-[310px] shrink-0 items-center pl-[3px]">
            <button aria-label="Set key" class="z-10 flex h-[50px] w-[50px] shrink-0 items-center justify-center rounded-full border border-black bg-gradient-to-b from-[#505050] to-[#383838]"><svg class="h-6 w-6" viewBox="0 0 24 24"><circle cx="15" cy="7" r="5" fill="none" stroke="#e4e4de" stroke-width="3"/><path d="M12 11 3 21M5 18l4 3M8 15l3 3" stroke="#e4e4de" stroke-width="3"/></svg></button>
            <button aria-label="Key menu" class="-ml-[6px] flex h-[27px] w-6 items-center justify-center border border-black bg-[#3c3c3c] pl-1 text-[#8a8a8a]"><svg class="h-[6px] w-2"><use href="#dn"/></svg></button>
            <div class="ml-[7px] flex flex-col gap-1">
                <button aria-label="Update keys" class="relative flex h-[30px] w-[29px] items-center justify-center border border-black bg-[#484848]"><svg class="h-[22px] w-[22px]" viewBox="0 0 22 22"><path d="M1 1h17v20H1z" fill="#777" stroke="#222"/><path d="M1 6h4v3H1zM1 15h4v3H1z" fill="#c02020"/><path d="M1 10h4v4H1z" fill="#48a030"/><path d="M8 10c0-6 8-7 11-3M19 12c0 6-8 7-11 3M19 3v5h-5M8 19v-5h5" fill="none" stroke="#222" stroke-width="4"/><path d="M8 10c0-6 8-7 11-3M19 12c0 6-8 7-11 3M19 3v5h-5M8 19v-5h5" fill="none" stroke="#eee" stroke-width="2"/></svg></button>
                <button aria-label="Channel editor" class="flex h-[30px] w-[29px] items-center justify-center border border-black bg-[#484848]"><svg class="h-5 w-5" viewBox="0 0 20 20"><path d="M0 0h20v20H0z" fill="#000"/><path d="M0 10h20" stroke="#ddd"/><path d="M0 11c4-6 6-4 10 0s6 3 10-3" fill="none" stroke="#e89828" stroke-width="1.800"/><path d="M3 10c2 9 5 9 7 0s5-9 7 0" fill="none" stroke="#4c88d8" stroke-width="1.500"/></svg></button>
            </div>
            <div class="ml-[6px] flex w-[192px] flex-col gap-[6px] text-[13px]">
                <button class="flex h-[30px] items-center border border-[#1c1c1c] bg-gradient-to-b from-[#505050] to-[#3a3a3a] pl-5 text-[#b8c0c0]"><span>0 keys, 9/9 channels</span><svg class="ml-auto mr-2 h-2 w-2 text-[#8a8a8a]"><use href="#up"/></svg></button>
                <label class="flex h-7 border border-[#1c1c1c] bg-gradient-to-b from-[#505050] to-[#3a3a3a]">
                    <select aria-label="Key scope" class="min-w-0 flex-1 appearance-none pl-[15px] leading-5 outline-none"><option>Key All Channels</option></select>
                    <span class="flex w-[22px] items-center justify-center bg-[#333]"><svg class="h-4 w-2"><use href="#spin"/></svg></span>
                </label>
            </div>
        </div>
    </section>

    <!-- Status bar -->
    <footer class="flex h-[31px] shrink-0 justify-end bg-[#181818]">
        <div class="flex w-[66px] items-center justify-around border-r border-[#555] bg-[#363636]">
            <button aria-label="Cook" class="relative"><svg class="h-6 w-6" viewBox="0 0 24 24"><path d="M2 13C1 5 8 2 14 3c8 1 9 7 7 11l-3 2v5l-4-4C8 19 3 18 2 13z" fill="#c8cac4"/><path d="M5 12c2-6 7-7 12-6M7 15c2-6 7-7 12-5M12 16c2-4 5-4 8-3M9 4v12M14 4v12" fill="none" stroke="#9c9e98" stroke-width=".8"/></svg><svg class="absolute -right-[2px] bottom-0 h-2 w-[6px] text-[#888]"><use href="#rt"/></svg></button>
            <button aria-label="Recook"><svg class="h-5 w-5" viewBox="0 0 20 20"><path d="M1 9C2 2 13 0 17 5M19 11c-1 7-12 9-16 4M18 0v7h-7M2 20v-7h7" fill="none" stroke="#6e6e6e" stroke-width="2.500"/></svg></button>
        </div>
        <label class="flex w-[138px] bg-gradient-to-b from-[#4c4c4c] to-[#3a3a3a] text-[13px]">
            <select aria-label="Update mode" class="min-w-0 flex-1 appearance-none pl-[19px] leading-6 outline-none"><option>Auto Update</option></select>
            <span class="flex w-6 items-center justify-center bg-[#2c2c2c]"><svg class="h-4 w-2"><use href="#spin"/></svg></span>
        </label>
    </footer>

    <script>
        const el = id => document.getElementById(id);

        // Shelf tabs: title, share of the row
        function shelfTabs(id, tabs) {
            el(id).innerHTML = tabs.map(([n, w], i) => `<button style="flex:${w} 1 0" class="${i ? 'border-b border-r border-black border-t border-t-[#4a4a4a] bg-[#2e2e2e] text-center' : 'border-r border-black bg-[#494949] text-center'}">${n}</button>`).join('');
        }
        shelfTabs('tabsL', [['Create', 50], ['Modify', 53], ['Model', 50], ['Poly...', 55], ['Deform', 56], ['Text...', 55], ['Rigg...', 54], ['Musc...', 58], ['Char...', 56], ['Cons...', 57], ['Hair...', 53], ['Guid...', 56], ['Guid...', 56], ['Terr...', 53], ['Simp...', 58]]);
        shelfTabs('tabsR', [['Light...', 54], ['Colli...', 55], ['Parti...', 55], ['Grains', 51], ['Vell...', 53], ['Rigi...', 53], ['Parti...', 55], ['Visc...', 54], ['Oceans', 56], ['Flui...', 53], ['Popul...', 61], ['Cont...', 57], ['Pyro FX', 56], ['Spar...', 57], ['FEM', 40], ['Wires', 47], ['Crowds', 57], ['Driv...', 53]]);

        // Shelf tools: label, icon, cell width
        function shelfTools(id, tools) {
            el(id).innerHTML = tools.map(([label, icon, w]) => {
                const two = label.includes('<br>');
                return `<button style="width:${w}px" class="relative flex h-full shrink-0 flex-col items-center pt-1 text-[11px]">
                    <svg class="h-[26px] w-[26px] shrink-0"><use href="#${icon}"/></svg>
                    <span class="${two ? '-mt-1 leading-[11px] whitespace-nowrap' : '-mt-px leading-4 whitespace-nowrap'}">${label}</span></button>`;
            }).join('') + '<svg class="ml-auto mr-[7px] h-[10px] w-2 text-[#8a8a8a]"><use href="#rt"/></svg>';
        }
        shelfTools('toolsL', [['Box', 'box', 51], ['Sphere', 'sphere', 51], ['Tube', 'tube', 51], ['Torus', 'torus', 51], ['Grid', 'grid', 51], ['Null', 'null', 51], ['Line', 'line', 51], ['Circle', 'circle', 51], ['Curve', 'curve', 51],
            ['Draw Curve', 'draw', 68], ['Path', 'path', 51], ['Spray Paint', 'spray', 69], ['Font', 'font', 49], ['Platonic<br>Solids', 'plato', 86], ['L-System', 'lsys', 53]]);
        shelfTools('toolsR', [['Camera', 'cam', 56], ['Point Light', 'plight', 62], ['Spot Light', 'slight', 63], ['Area Light', 'alight', 62], ['Geometry<br>Light', 'glight', 82], ['Volume Light', 'vlight', 76], ['Distant Light', 'dlight', 75],
            ['Environment<br>Light', 'elight', 83], ['Sky Light', 'sky', 55], ['GI Light', 'gil', 53], ['Caustic Light', 'caustic', 73], ['Portal Light', 'portal', 70], ['Ambient Light', 'ambient', 80], ['Stereo<br>Camera', 'stereo', 84]]);

        // Pane tabs; a leading * marks an italic title, short titles get more room before the close mark
        document.querySelectorAll('[data-tabs]').forEach(box => {
            box.innerHTML = box.dataset.tabs.split('|').map((t, i) => {
                const italic = t[0] === '*';
                const title = italic ? t.slice(1) : t;
                return `<button class="${i ? 'flex items-center border-r-2 border-[#222] pl-[9px] pr-[5px]' : 'flex items-center bg-[#494949] pl-2 pr-[7px]'}">
                    <span style="margin-right:${Math.round(25 - title.length * 0.7)}px" class="${italic ? 'italic' : ''}">${title}</span><svg class="h-2 w-2"><use href="#x"/></svg></button>`;
            }).join('') + '<button aria-label="New tab" class="ml-[10px]"><svg class="h-3 w-3"><use href="#plus"/></svg></button>';
        });

        // Left tool column: icon, cell height, active, flyout
        const sep = '<hr class="my-[5px] w-[34px] border-[#555]">';
        el('colL').insertAdjacentHTML('beforeend',
            '<div class="mb-[9px] mt-[7px] flex w-[31px] flex-col border border-black bg-[#474747]">' +
            ['cone', 'diam', 'ycube'].map((n, i) => `<button aria-label="${n}" class="${i ? 'relative flex h-[29px] items-center justify-center border-t border-black' : 'relative flex h-[30px] items-center justify-center bg-gradient-to-b from-[#617682] to-[#8a9294]'}"><svg class="h-6 w-6"><use href="#${n}"/></svg><svg class="absolute bottom-1 right-[1px] h-2 w-[5px] text-[#888]"><use href="#rt"/></svg></button>`).join('') +
            '</div><hr class="mb-6 w-full border-[#555]">' +
            [['arrow', 38, 0, 1], ['lock', 34, 1, 0], ['move', 35, 0, 0], ['rot', 35, 0, 0], ['scl', 35, 0, 0], ['pose', 35, 0, 0], ['handle', 34, 0, 1], 0, ['mg1', 35, 0, 1], ['mg2', 35, 0, 1], ['mg3', 35, 0, 1], ['mg', 37, 0, 1], 0, ['cam', 34, 1, 1], ['dn', 20, 0, 0], ['fan', 31, 0, 1], ['reel', 33, 0, 1]]
                .map(r => r ? `<button aria-label="${r[0]}" style="height:${r[1]}px" class="${r[2] ? 'relative flex w-[34px] shrink-0 items-center justify-center border border-[#555] bg-gradient-to-b from-[#617682] to-[#8a9294]' : 'relative flex w-[34px] shrink-0 items-center justify-center text-[#888]'}"><svg class="${r[0] === 'dn' ? 'h-[7px] w-2' : r[0] === 'arrow' ? 'h-[29px] w-[26px]' : 'h-[26px] w-[26px]'}"><use href="#${r[0]}"/></svg>${r[3] ? '<svg class="absolute bottom-1 right-0 h-2 w-[5px] text-[#888]"><use href="#rt"/></svg>' : ''}</button>` : sep).join(''));

        // Display options column
        el('colR').insertAdjacentHTML('beforeend',
            [['rgrid', 1, 1], ['rpic', 0, 1], ['rlock'], ['rbx'], ['rball', 0, 1], ['rbulb', 1, 1], ['rbulb2', 0, 1], ['rbulb3', 0, 1], ['rcube', 1, 1], ['glass', 0, 1], ['glass2', 0, 1], 0, ['dot'], ['nrm'], ['nrm2'], ['pn'], ['fn'], ['fn2'], ['hull'], ['prim'], ['vtx']]
                .map(r => r ? `<button aria-label="${r[0]}" class="${r[1] ? 'relative my-[1px] flex h-[29px] w-[29px] shrink-0 items-center justify-center border border-[#555] bg-gradient-to-b from-[#617682] to-[#8a9294]' : 'relative flex h-[31px] w-[29px] shrink-0 items-center justify-center'}"><svg class="h-[22px] w-[22px]"><use href="#${r[0]}"/></svg>${r[2] ? '<svg class="absolute bottom-[2px] right-0 h-2 w-[5px] text-[#888]"><use href="#rt"/></svg>' : ''}</button>` : '<hr class="mb-[4px] w-full border-[#555]">').join('') +
            '<svg class="h-[7px] w-2 shrink-0 text-[#888]"><use href="#dn"/></svg>');

        // Vector parameters
        const underline = [
            'border-b-2 border-b-[#b8341f]', 'border-b-2 border-b-[#3fa428]', 'border-b-2 border-b-[#40329c]'
        ];
        el('vectors').innerHTML = [['Translate', 0, 'axes', 1], ['Rotate', 0, 'orb', 1], ['Scale', 1, 'hex', 1], ['Pivot Translate', 0, 'piv', 0], ['Pivot Rotate', 0, 'piv', 0]]
            .map(([name, v, icon, col]) => `<div class="flex h-8 items-center"><label for="${icon + name.length}" class="w-[159px] text-right">${name}</label><span class="ml-[17px] flex gap-[3px]">` +
                [0, 1, 2].map(i => `<input id="${i ? name + i : icon + name.length}" aria-label="${name} ${'xyz'[i]}" value="${v}" class="h-7 w-[124px] border border-[#2a2a2a] bg-[#131313] px-[3px] font-['Liberation_Mono',monospace] text-[14px] text-[#e4e4e4] outline-none ${col ? underline[i] : ''}">`).join('') +
                `</span><svg class="ml-1 h-[22px] w-[22px]"><use href="#${icon}"/></svg></div>`).join('');

        // Transport buttons
        el('play').innerHTML = [
            ['First frame', 'M1 4h3v16H1zM14 4v16L5 12zM26 4v16l-9-8z'], ['Play reverse', 'M19 3v18L6 12z'], ['Stop', 'M4 3h18v18H4z'], ['Play', 'M7 3v18l13-9z'], ['Last frame', 'M22 4h3v16h-3zM12 4v16l9-8zM1 4v16l9-8z']
        ].map(([n, d]) => `<button aria-label="${n}" class="${n === 'Stop' ? 'flex w-[34px] items-center justify-center border-y border-r border-black bg-gradient-to-b from-[#617682] to-[#8a9294]' : 'flex w-[34px] items-center justify-center border-y border-r border-black bg-gradient-to-b from-[#4e4e4e] to-[#383838]'}"><svg class="h-6 w-[26px]" viewBox="0 0 26 24"><path d="${d}" fill="#e2e4de" stroke="#222" stroke-width=".8"/></svg></button>`).join('');
        el('opts').innerHTML = [
            ['Flipbook', '<path d="M3 1h17v22H3z" fill="#ddd"/><path d="M3 1h17v5H3z" fill="#666"/><path d="M3 3h17" stroke="#bbb"/><path d="M13 9v13l3-3 2 4 3-1-2-4h5z" fill="#111" stroke="#eee" stroke-width=".8"/>'],
            ['Audio', '<path d="M2 8h5l8-7v22l-8-7H2z" fill="#6c7c84" stroke="#222"/><ellipse cx="17" cy="12" rx="4.500" ry="10.500" fill="#3c464c" stroke="#d8dcd8" stroke-width="1.800"/><circle cx="15" cy="12" r="2.500" fill="#ccc"/>'],
            ['Loop', '<path d="M2 20h19c4-13-5-17-13-12L4 4 1 14l10 0-2-3c5-3 9-1 8 4H3z" fill="#222" stroke="#e4e4de" stroke-width="1.800" stroke-linejoin="round"/>'],
            ['Realtime', '<circle cx="12" cy="12" r="10" fill="#30383c" stroke="#d8dcd6" stroke-width="1.600"/><circle cx="12" cy="12" r="6.500" fill="#444" stroke="#d8dcd6"/><path d="M12 7v8M8 12h8" stroke="#eee" stroke-width="1.600"/>']
        ].map(([n, g]) => `<button aria-label="${n}" class="flex w-[34px] items-center justify-center border-y border-r border-black bg-gradient-to-b from-[#4e4e4e] to-[#383838]"><svg class="h-6 w-6" viewBox="0 0 24 24">${g}</svg></button>`).join('') +
            '<button aria-label="Previous key" class="ml-1 flex w-[29px] items-center justify-center border border-black bg-[#343434]"><svg class="h-3 w-3" viewBox="0 0 12 12"><path d="M0 0h3v12H0z" fill="#3c5030"/><path d="M12 1v10L5 6z" fill="#666"/></svg></button>' +
            '<button aria-label="Next key" class="flex w-[29px] items-center justify-center border border-l-0 border-black bg-[#343434]"><svg class="h-3 w-3" viewBox="0 0 12 12"><path d="M9 0h3v12H9z" fill="#3c5030"/><path d="M0 1v10l7-5z" fill="#666"/></svg></button>';

        // Timeline, 24 frames per labelled tick
        let t = '<path d="M0 25H1320" stroke="#aaa" stroke-width="1.500"/>';
        for (let f = 6; f <= 240; f += 6) {
            const x = Math.floor((f - 1) * 5.5);
            const big = f % 24 === 0;
            t += `<path d="M${x}.5 ${big ? 16 : 19}V${big ? 34 : 30}" stroke="${big ? '#aaa' : '#777'}"/>`;
            if (big) t += `<text x="${x}" y="10" font-size="12" fill="#999">${f}</text>`;
        }
        t += '<path d="M.5 25V.5H30.500V19.500H6z" fill="#000" stroke="#eee" stroke-width="1.500"/><text x="11" y="15" font-size="15" fill="#fff">1</text>';
        el('timeline').innerHTML = t;

        // Ground grid seen in perspective, 5 cells per unit
        const project = (x, z) => {
            const w = 1 - 0.1006 * (x + z);
            return [672.5 + 167.1 * (x - z) / w, (538.2 + 7.5 * (x + z)) / w];
        };
        let g = '';
        for (let i = -75; i <= 28; i++) {
            const a = i / 5, far = -15, near = Math.min(6, 8.5 - a);
            const major = i % 5 === 0;
            const fade = i < -45 ? 0.25 : i < -20 ? 0.45 : 0.7;
            for (const p of [[project(a, far), project(a, near)], [project(far, a), project(near, a)]]) {
                const d = p.map(q => q.map(v => v.toFixed(1)).join(' ')).join('L');
                g += `<path d="M${d}" stroke="${major ? '#6f7f8a' : '#73838c'}" stroke-width="${major ? 2.4 : 1.2}" opacity="${major ? fade + 0.1 : fade}"/>`;
            }
        }
        el('lines').innerHTML = g;
    </script>
</body>
</html>
